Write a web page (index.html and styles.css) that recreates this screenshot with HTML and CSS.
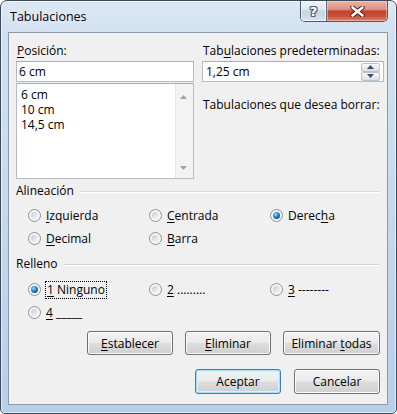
FILE: index.html
```html
<!DOCTYPE html>
<html lang="es">
<head>
<meta charset="utf-8">
<title>Tabulaciones</title>
<link rel="stylesheet" href="styles.css">
</head>
<body>
<div class="window">
  <div class="titlebar">
    <span class="title">Tabulaciones</span>
    <div class="caption-buttons">
      <div class="cap-btn help"><span>?</span></div>
      <div class="cap-btn close">
        <svg width="15" height="11" viewBox="0 0 15 11">
          <path d="M2.5 1.5 L12.5 9.5 M12.5 1.5 L2.5 9.5" stroke="#4a1c14" stroke-width="4.4" stroke-linecap="round" fill="none"/>
          <path d="M2.5 1.5 L12.5 9.5 M12.5 1.5 L2.5 9.5" stroke="#ffffff" stroke-width="2.6" stroke-linecap="round" fill="none"/>
        </svg>
      </div>
    </div>
  </div>
  <div class="client">
    <div class="top">
      <div class="col col-left">
        <div class="label"><u>P</u>osición:</div>
        <div class="textbox">6 cm</div>
        <div class="listbox">
          <div class="items">
            <div class="item">6 cm</div>
            <div class="item">10 cm</div>
            <div class="item">14,5 cm</div>
          </div>
          <div class="vscroll">
            <svg width="7" height="4" viewBox="0 0 7 4"><path d="M0 4 L3.5 0 L7 4 Z" fill="#a3a3a3"/></svg>
            <svg width="7" height="4" viewBox="0 0 7 4"><path d="M0 0 L7 0 L3.5 4 Z" fill="#a3a3a3"/></svg>
          </div>
        </div>
      </div>
      <div class="col col-right">
        <div class="label">Tab<u>u</u>laciones predeterminadas:</div>
        <div class="textbox spinbox">
          <span class="spin-value">1,25 cm</span>
          <div class="spin">
            <div class="spin-btn"><svg width="7" height="4" viewBox="0 0 7 4"><path d="M0 4 L3.5 0 L7 4 Z" fill="#2f4f7a"/></svg></div>
            <div class="spin-btn"><svg width="7" height="4" viewBox="0 0 7 4"><path d="M0 0 L7 0 L3.5 4 Z" fill="#2f4f7a"/></svg></div>
          </div>
        </div>
        <div class="label borrar">Tabulaciones que desea borrar:</div>
      </div>
    </div>

    <div class="group-head group-align"><span>Alineación</span><div class="rule"></div></div>
    <div class="radios radios-align">
      <div class="opt"><span class="radio"></span><span><u>I</u>zquierda</span></div>
      <div class="opt"><span class="radio"></span><span><u>C</u>entrada</span></div>
      <div class="opt"><span class="radio checked"></span><span>Derec<u>h</u>a</span></div>
      <div class="opt"><span class="radio"></span><span><u>D</u>ecimal</span></div>
      <div class="opt"><span class="radio"></span><span><u>B</u>arra</span></div>
    </div>

    <div class="group-head group-fill"><span>Relleno</span><div class="rule"></div></div>
    <div class="radios radios-fill">
      <div class="opt"><span class="radio checked"></span><span class="focus"><u>1</u> Ninguno</span></div>
      <div class="opt"><span class="radio"></span><span><u>2</u> .........</span></div>
      <div class="opt"><span class="radio"></span><span><u>3</u> --------</span></div>
      <div class="opt"><span class="radio"></span><span><u>4</u> _____</span></div>
    </div>

    <div class="btn-row row1">
      <div class="btn w86"><span><u>E</u>stablecer</span></div>
      <div class="btn w86"><span><u>E</u>liminar</span></div>
      <div class="btn w97"><span>Eliminar <u>t</u>odas</span></div>
    </div>
    <div class="btn-row row2">
      <div class="btn w86 default"><span>Aceptar</span></div>
      <div class="btn w86"><span>Cancelar</span></div>
    </div>
  </div>
</div>
</body>
</html>
```
FILE: styles.css
```css
* { box-sizing: border-box; }
html, body { margin: 0; padding: 0; }
body {
  width: 397px;
  height: 414px;
  overflow: hidden;
  background: #ffffff;
  font-family: "Open Sans", "Liberation Sans", sans-serif;
  font-size: 12px;
  color: #000;
}
u { text-decoration: underline; text-underline-offset: 2px; text-decoration-thickness: 1px; }

.window {
  width: 397px;
  height: 414px;
  border: 1px solid #3d4a5c;
  border-radius: 7px 7px 5px 5px;
  background: linear-gradient(180deg, #dce8f4 0%, #d2e1f1 8%, #c3d7ec 60%, #b8cfe8 100%);
  box-shadow: inset 0 0 0 1px rgba(255,255,255,0.6);
  padding: 0 8px 8px 7px;
  display: flex;
  flex-direction: column;
}

.titlebar {
  height: 31px;
  display: flex;
  align-items: flex-start;
  padding-left: 2px;
}
.title {
  margin-top: 7px;
  line-height: 18px;
  font-size: 12.5px;
  color: #000;
  text-shadow: 0 0 6px rgba(255,255,255,0.9);
}
.caption-buttons {
  margin-left: auto;
  display: flex;
  height: 21px;
  border: 1px solid #4b5a70;
  border-top: none;
  border-radius: 0 0 5px 5px;
  overflow: hidden;
}
.cap-btn {
  height: 100%;
  display: flex;
  align-items: center;
  justify-content: center;
}
.help {
  width: 26px;
  border-right: 1px solid #5d6c80;
  background: linear-gradient(180deg, #eef3f8 0%, #dde6f0 45%, #c7d4e3 50%, #cfdbe8 80%, #dde7f1 100%);
  box-shadow: inset 0 0 0 1px rgba(255,255,255,0.6);
}
.help span {
  font-family: "DejaVu Sans", sans-serif;
  font-weight: bold;
  font-size: 13px;
  line-height: 13px;
  color: #ffffff;
  text-shadow: 1px 0 0 #4d6079, -1px 0 0 #4d6079, 0 1px 0 #4d6079, 0 -1px 0 #4d6079, 1px 1px 0 #4d6079, -1px -1px 0 #4d6079, 1px -1px 0 #4d6079, -1px 1px 0 #4d6079;
}
.close {
  width: 60px;
  background: linear-gradient(180deg, #eab3a6 0%, #df9181 42%, #c7432d 50%, #c94f38 75%, #e0836d 100%);
  box-shadow: inset 0 0 0 1px rgba(255,220,210,0.5);
}

.client {
  flex: 1;
  background: #f0f0f0;
  border: 1px solid #8a9bb1;
  display: flex;
  flex-direction: column;
}

.top {
  display: flex;
  margin-top: 10px;
  padding-left: 7px;
  gap: 8px;
}
.col { display: flex; flex-direction: column; }
.col-left { width: 178px; }
.col-right { width: 182px; }
.label {
  line-height: 16px;
  height: 16px;
  padding-left: 1px;
  margin-bottom: 2px;
  white-space: nowrap;
}
.textbox {
  height: 21px;
  background: #fff;
  border: 1px solid #b5bcc7;
  border-top-color: #abadb3;
  padding-left: 2px;
  line-height: 19px;
  white-space: nowrap;
}
.listbox {
  margin-top: 1px;
  height: 96px;
  background: #fff;
  border: 1px solid #b5bcc7;
  border-top-color: #abadb3;
  display: flex;
}
.items {
  flex: 1;
  padding: 4px 0 0 4px;
  display: flex;
  flex-direction: column;
  gap: 1px;
}
.item {
  height: 14px;
  line-height: 14px;
}
.vscroll {
  width: 18px;
  background: #f3f3f3;
  border-left: 1px solid #e6e6e6;
  display: flex;
  flex-direction: column;
  justify-content: space-between;
  align-items: center;
  padding: 11px 2px 8px 0;
}
.vscroll svg { display: block; }

.spinbox {
  display: flex;
  align-items: center;
  padding-right: 3px;
}
.spin-value { flex: 1; padding-left: 1px; }
.spin {
  width: 19px;
  height: 18px;
  display: flex;
  flex-direction: column;
}
.spin-btn {
  flex: 1;
  border: 1px solid #b9c2cd;
  border-radius: 2px;
  background: linear-gradient(180deg, #fafafa 0%, #ececec 50%, #dedede 100%);
  display: flex;
  align-items: center;
  justify-content: center;
}
.borrar { margin-top: 15px; }

.group-head {
  display: flex;
  align-items: center;
  height: 16px;
  line-height: 16px;
  padding: 0 7px;
}
.group-head .rule {
  flex: 1;
  height: 2px;
  border-top: 1px solid #d5d9de;
  border-bottom: 1px solid #ffffff;
  margin-left: 6px;
  margin-top: 1px;
}
.group-align { margin-top: 4px; }
.group-fill { margin-top: 6px; }

.radios {
  display: grid;
  grid-template-columns: 121px 121px auto;
  grid-auto-rows: 23px;
  padding-left: 19px;
}
.radios-align { margin-top: 5px; }
.radios-fill { margin-top: 6px; }
.opt {
  display: flex;
  align-items: center;
  white-space: nowrap;
}
.radio {
  position: relative;
  width: 13px;
  height: 13px;
  border-radius: 50%;
  border: 1px solid #8e9092;
  background: #f6f6f6;
  margin-right: 5px;
  flex: none;
}
.radio::after {
  content: "";
  position: absolute;
  inset: 2px;
  border-radius: 50%;
  background: linear-gradient(135deg, #c3c6cb 0%, #e2e3e5 50%, #f8f8f8 100%);
}
.radio.checked::after {
  background: radial-gradient(circle at 38% 35%, #b5e4fb 0%, #3c98dc 30%, #10589c 70%, #0b3e70 100%);
}
.focus {
  outline: 1px dotted #000;
  outline-offset: 0;
  padding: 0 1px;
  line-height: 16px;
}

.btn-row {
  display: flex;
  justify-content: flex-end;
  gap: 12px;
  padding-right: 7px;
}
.row1 { margin-top: 7px; }
.row2 { margin-top: 14px; gap: 13px; }
.btn {
  height: 24px;
  border: 1px solid #707070;
  border-radius: 3px;
  background: linear-gradient(180deg, #f2f2f2 0%, #ebebeb 48%, #dddddd 52%, #cfcfcf 100%);
  box-shadow: inset 0 0 0 1px #fbfbfb;
  display: flex;
  align-items: center;
  justify-content: center;
  white-space: nowrap;
}
.row2 .btn { height: 25px; }
.w86 { width: 86px; }
.w97 { width: 97px; }
.btn.default {
  border-color: #3c7fb1;
  box-shadow: inset 0 0 0 1px #a8dff8, inset 0 0 0 2px #d8f0fc;
}
```
